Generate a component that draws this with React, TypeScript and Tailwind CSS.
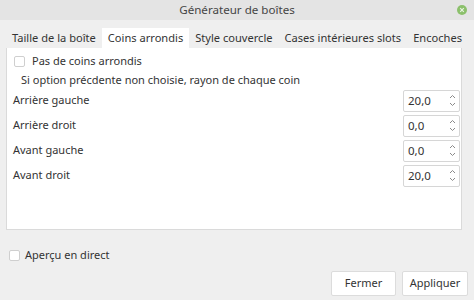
import * as React from "react"

const font = { fontFamily: '"Noto Sans", "Open Sans", sans-serif' }

function Check({ className = "" }: { className?: string }) {
  return <span className={"block w-[11px] h-[11px] border border-[#cfcfcf] bg-white rounded-[2px] " + className} />
}

function Spin({ value }: { value: string }) {
  return (
    <div className="flex items-center w-[57px] h-[22px] border border-[#d6d6d6] bg-white rounded-[2px] pl-[4px] pr-[3px]">
      <span className="flex-1 text-[11.5px]">{value}</span>
      <div className="flex flex-col items-center text-[#8a8a8a] leading-none">
        <svg width="7" height="5" viewBox="0 0 7 5"><path d="M1 4L3.5 1.5L6 4" fill="none" stroke="currentColor" strokeWidth="1" /></svg>
        <svg width="7" height="5" viewBox="0 0 7 5" className="mt-[3px]"><path d="M1 1L3.5 3.5L6 1" fill="none" stroke="currentColor" strokeWidth="1" /></svg>
      </div>
    </div>
  )
}

export default function App() {
  const tabs = ["Taille de la boîte", "Coins arrondis", "Style couvercle", "Cases intérieures slots", "Encoches"]
  const rows: [string, string][] = [
    ["Arrière gauche", "20,0"],
    ["Arrière droit", "0,0"],
    ["Avant gauche", "0,0"],
    ["Avant droit", "20,0"],
  ]
  return (
    <div className="w-[474px] h-[300px] bg-[#efefef] text-[#333333] text-[11px] flex flex-col overflow-hidden" style={font}>
      <div className="h-[20px] bg-[#e4e4e4] flex items-center justify-center relative shrink-0">
        <span className="text-[11.6px] text-[#444444]">Générateur de boîtes</span>
        <span className="absolute right-[7px] top-[5px] w-[10px] h-[10px] rounded-full bg-[#8bc06b] flex items-center justify-center">
          <svg width="6" height="6" viewBox="0 0 6 6"><path d="M1.2 1.2L4.8 4.8M4.8 1.2L1.2 4.8" stroke="#e9f3e2" strokeWidth="1.2" /></svg>
        </span>
      </div>
      <div className="flex pl-[6px] mt-[8px] h-[20px] shrink-0 text-[11.1px]">
        {tabs.map((t, i) => (
          <div key={t} className={"px-[6px] flex items-center whitespace-nowrap " + (i === 1 ? "bg-white" : "")}>
            {t}
          </div>
        ))}
      </div>
      <div className="mx-[6px] w-[456px] h-[182px] bg-white border border-[#dadada] border-t-0 flex flex-col shrink-0">
        <div className="flex items-center gap-[7px] pl-[7px] mt-[7px] h-[12px]">
          <Check />
          <span>Pas de coins arrondis</span>
        </div>
        <div className="pl-[14px] mt-[5px] h-[16px] flex items-center">Si option précdente non choisie, rayon de chaque coin</div>
        <div className="flex flex-col gap-[2px] mt-[1px] pr-[1px]">
          {rows.map(([l, v]) => (
            <div key={l} className="flex items-center justify-between pl-[6px] h-[23px]">
              <span>{l}</span>
              <Spin value={v} />
            </div>
          ))}
        </div>
      </div>
      <div className="flex items-center gap-[5px] pl-[9px] mt-[19px] h-[12px]">
        <Check />
        <span>Aperçu en direct</span>
      </div>
      <div className="flex justify-end gap-[6px] pr-[6px] mt-[10px]">
        <button className="w-[65px] h-[25px] bg-white border border-[#dcdcdc] rounded-[2px]">Fermer</button>
        <button className="w-[66px] h-[25px] bg-white border border-[#dcdcdc] rounded-[2px]">Appliquer</button>
      </div>
    </div>
  )
}
